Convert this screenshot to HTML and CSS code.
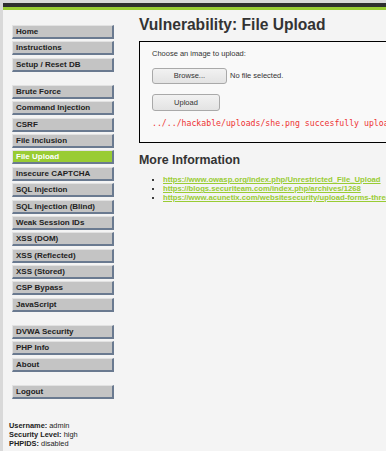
FILE: index.html
```html
<!DOCTYPE html>
<html>
<head>
<meta charset="utf-8">
<title>DVWA - File Upload</title>
<link rel="stylesheet" href="styles.css">
</head>
<body>
<div class="container">
  <div class="header"></div>
  <div class="layout">
    <div class="menu">
      <ul class="group">
        <li><a>Home</a></li>
        <li><a>Instructions</a></li>
        <li><a>Setup / Reset DB</a></li>
      </ul>
      <ul class="group">
        <li><a>Brute Force</a></li>
        <li><a>Command Injection</a></li>
        <li><a>CSRF</a></li>
        <li><a>File Inclusion</a></li>
        <li class="selected"><a>File Upload</a></li>
        <li><a>Insecure CAPTCHA</a></li>
        <li><a>SQL Injection</a></li>
        <li><a>SQL Injection (Blind)</a></li>
        <li><a>Weak Session IDs</a></li>
        <li><a>XSS (DOM)</a></li>
        <li><a>XSS (Reflected)</a></li>
        <li><a>XSS (Stored)</a></li>
        <li><a>CSP Bypass</a></li>
        <li><a>JavaScript</a></li>
      </ul>
      <ul class="group">
        <li><a>DVWA Security</a></li>
        <li><a>PHP Info</a></li>
        <li><a>About</a></li>
      </ul>
      <ul class="group">
        <li><a>Logout</a></li>
      </ul>
      <div class="status">
        <div><b>Username:</b> admin</div>
        <div><b>Security Level:</b> high</div>
        <div><b>PHPIDS:</b> disabled</div>
      </div>
    </div>
    <div class="main">
      <h1 class="title">Vulnerability: File Upload</h1>
      <div class="code-area">
        <div class="prompt">Choose an image to upload:</div>
        <div class="file-row">
          <span class="btn btn-browse">Browse...</span>
          <span class="file-name">No file selected.</span>
        </div>
        <div class="submit-row"><span class="btn btn-upload">Upload</span></div>
        <pre class="result">../../hackable/uploads/she.png succesfully uploaded!</pre>
      </div>
      <h2 class="subtitle">More Information</h2>
      <ul class="links">
        <li><a>https://www.owasp.org/index.php/Unrestricted_File_Upload</a></li>
        <li><a>https://blogs.securiteam.com/index.php/archives/1268</a></li>
        <li><a>https://www.acunetix.com/websitesecurity/upload-forms-threat/</a></li>
      </ul>
    </div>
  </div>
</div>
</body>
</html>
```
FILE: styles.css
```css
html, body {
  margin: 0;
  padding: 0;
  overflow: hidden;
}
body {
  background: #d9d9d9;
  padding: 3px 0 0 3px;
  font-family: "Liberation Sans", Arial, sans-serif;
  color: #333;
}
.container {
  background: #f4f4f4;
  height: 448px;
  overflow: hidden;
}
.header {
  height: 4px;
  background: #2f2f2f;
  border-bottom: 3px solid #99cc33;
}
.layout {
  display: flex;
  align-items: flex-start;
}
.menu {
  flex: 0 0 102px;
  padding: 15px 0 0 9px;
}
.group {
  list-style: none;
  margin: 0 0 13px 0;
  padding: 0;
}
.group li {
  margin-bottom: 2.4px;
}
.group li a {
  display: block;
  height: 11px;
  line-height: 11px;
  padding-left: 3px;
  background: #c4c4c4;
  border-top: 1px solid #e2e2e2;
  border-left: 1px solid #e2e2e2;
  border-right: 2px solid #6a7a90;
  border-bottom: 2px solid #6a7a90;
  font-size: 8px;
  font-weight: bold;
  color: #222;
  white-space: nowrap;
}
.group li.selected a {
  background: #99cc33;
  color: #fff;
}
.status {
  margin-top: 22px;
  margin-left: -3px;
  font-size: 7.4px;
  line-height: 9px;
  color: #222;
}
.main {
  flex: 1 1 auto;
  padding-left: 25px;
  min-width: 320px;
}
.title {
  margin: 6px 0 7px 0;
  font-size: 15.6px;
  line-height: 18px;
  font-weight: bold;
  color: #333;
  white-space: nowrap;
}
.code-area {
  width: 320px;
  background: #f9f9f9;
  border: 1px solid #000;
  padding: 7px 0 14px 12px;
}
.prompt {
  font-size: 7.5px;
  line-height: 9px;
  color: #333;
}
.file-row {
  display: flex;
  align-items: center;
  margin-top: 9.5px;
}
.btn {
  display: inline-flex;
  align-items: center;
  justify-content: center;
  box-sizing: border-box;
  border: 1px solid #a9a9a9;
  border-radius: 3px;
  background: linear-gradient(#f2f2f2, #e3e3e3);
  font-size: 7.5px;
  color: #333;
}
.btn-browse {
  width: 75px;
  height: 16px;
}
.file-name {
  margin-left: 3px;
  font-size: 7.5px;
  color: #333;
}
.submit-row {
  margin-top: 10px;
  display: flex;
}
.btn-upload {
  width: 68px;
  height: 17px;
}
.result {
  margin: 8.5px 0 0 0;
  font-family: "DejaVu Sans Mono", "Liberation Mono", monospace;
  font-size: 8.2px;
  line-height: 9px;
  color: #ee3333;
  white-space: nowrap;
}
.subtitle {
  margin: 10px 0 7px 0;
  font-size: 12.4px;
  line-height: 15px;
  font-weight: bold;
  color: #333;
}
.links {
  margin: 0;
  padding-left: 24px;
  font-size: 7.7px;
  line-height: 9px;
  white-space: nowrap;
}
.links li {
  color: #000;
}
.links a {
  color: #99cc33;
  font-weight: bold;
  text-decoration: underline;
}
```
